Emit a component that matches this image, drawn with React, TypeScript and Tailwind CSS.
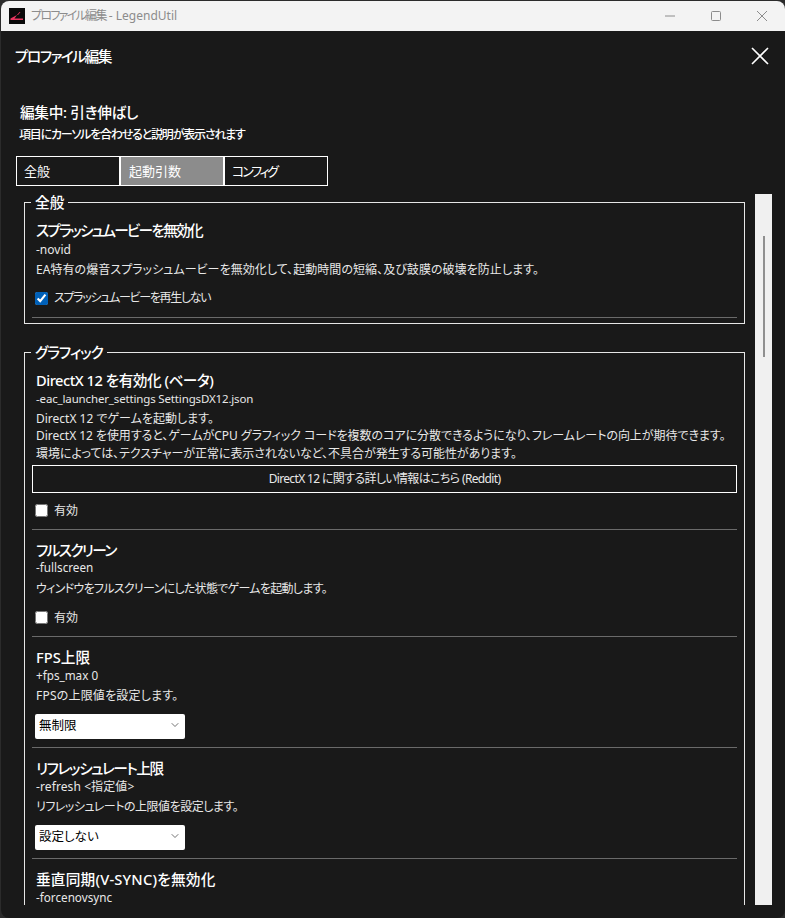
import React from 'react'
import { ChevronDown } from 'lucide-react'

const Heading = ({ title, code, titleClass, codeClass }: { title: string, code: string, titleClass?: string, codeClass?: string }) => (
  <>
    <h4 className={`text-[14.67px] leading-[20px] font-medium text-white ${titleClass}`}>{title}</h4>
    <p className={`leading-[16px] text-[#e8e8e8] ${codeClass}`}>{code}</p>
  </>
)

const Check = ({ label, checked, labelClass }: { label: string, checked?: boolean, labelClass?: string }) => (
  <label className="flex items-center gap-[6px] -ml-px text-[12px] leading-[16px] text-[#e8e8e8]">
    <input type="checkbox" defaultChecked={checked} className="w-[13px] h-[13px] m-0 accent-[#0060b8]" />
    <span className={labelClass}>{label}</span>
  </label>
)

const Dropdown = ({ value }: { value: string }) => (
  <div className="relative w-[150px] h-[25px] -ml-px">
    <select defaultValue={value} className="appearance-none w-full h-full bg-white text-black text-[12.5px] pl-[4px] rounded-[2px] outline-none">
      <option>{value}</option>
    </select>
    <ChevronDown size={12} strokeWidth={1.5} className="absolute right-[4px] top-[7px] text-[#444] pointer-events-none" />
  </div>
)

const Divider = () => <hr className="border-0 h-px bg-[#6a6a6a] -mx-[4px]" />

const Section = ({ title, className, legendClass, children }: { title: string, className?: string, legendClass?: string, children: React.ReactNode }) => (
  <fieldset className={`border border-[#e6e6e6] mx-[24px] w-[721px] px-[11px] ${className}`}>
    <legend className={`px-[4px] -ml-[5px] text-[14.67px] leading-[16px] font-medium text-white ${legendClass}`}>{title}</legend>
    {children}
  </fieldset>
)

export default function App() {
  return (
    <div className="w-[785px] h-[918px] bg-[#2b2b2b] pt-px pl-px overflow-hidden [font-family:'Noto_Sans','Noto_Sans_CJK_JP',sans-serif] [font-feature-settings:'palt']">
      <div className="h-[917px] bg-[#191919] rounded-lg overflow-hidden flex flex-col">
        <div className="h-[30px] shrink-0 bg-[#f3f3f3] flex items-center pl-[8px]">
          <svg width="16" height="16" viewBox="0 0 16 16">
            <rect width="16" height="16" fill="#0a0a0a" />
            <path d="M1.5 10.5 L8 7 L5.5 10.5 H14 V12 H1.5 Z" fill="#e8345f" />
            <path d="M8 7 L10.5 4 L11.5 4 L9 7 Z" fill="#e8345f" />
          </svg>
          <span className="ml-[6px] text-[12px] text-[#8c8c8c]"><span className="tracking-[-1.7px]">プロファイル編集</span> - LegendUtil</span>
          <div className="ml-auto flex items-center">
            <svg width="46" height="30" viewBox="0 0 46 30"><path d="M18 15 H28" stroke="#8c8c8c" /></svg>
            <svg width="46" height="30" viewBox="0 0 46 30"><rect x="18.5" y="10.5" width="9" height="9" rx="1" fill="none" stroke="#8c8c8c" /></svg>
            <svg width="46" height="30" viewBox="0 0 46 30"><path d="M18 10 L28 20 M28 10 L18 20" stroke="#8c8c8c" /></svg>
          </div>
        </div>

        <div className="flex items-center justify-between h-[35px] mt-[7px] pl-[14px] pr-[16px]">
          <h1 className="text-[14.67px] tracking-[-1.5px] font-medium text-white">プロファイル編集</h1>
          <svg width="18" height="18" viewBox="0 0 18 18"><path d="M1 1 L17 17 M17 1 L1 17" stroke="#fff" strokeWidth="1.6" /></svg>
        </div>

        <div className="pl-[19px] mt-[29px]">
          <h2 className="text-[14.67px] leading-[20px] tracking-[-0.3px] font-medium text-white">編集中: 引き伸ばし</h2>
          <p className="text-[12px] leading-[16px] mt-[5px] -ml-px tracking-[-1.2px] font-medium text-white">項目にカーソルを合わせると説明が表示されます</p>
        </div>

        <div className="flex ml-[15px] mt-[13px]">
          <div className="w-[104px] h-[30px] border border-white flex items-center pl-[7px] pt-px text-[13px] text-white">全般</div>
          <div className="w-[104px] h-[30px] border border-white bg-[#8c8c8c] flex items-center pl-[8px] pt-px text-[13px] text-white">起動引数</div>
          <div className="w-[104px] h-[30px] border border-white flex items-center pl-[7px] pt-px text-[13px] tracking-[-2.2px] text-white">コンフィグ</div>
        </div>

        <div className="relative h-[715px] mt-[4px] pt-[4px] overflow-hidden -ml-px">
          <div className="absolute left-[755px] top-[4px] w-[17px] h-[711px] bg-[#f0f0f0]">
            <div className="absolute left-[8px] top-[42px] w-[2px] h-[121px] bg-[#8f8f8f]" />
          </div>

          <Section title="全般" className="h-[130px] pt-[10px]">
            <Heading title="スプラッシュムービーを無効化" code="-novid" titleClass="tracking-[-1.75px]" codeClass="mt-[2px] text-[12px]" />
            <p className="text-[12px] leading-[18px] mt-[3px] tracking-[0.05px] text-[#e8e8e8]">EA特有の爆音スプラッシュムービーを無効化して、起動時間の短縮、及び鼓膜の破壊を防止します。</p>
            <div className="mt-[11px]"><Check label="スプラッシュムービーを再生しない" labelClass="tracking-[-1.3px]" checked /></div>
            <div className="mt-[11px]"><Divider /></div>
          </Section>

          <Section title="グラフィック" legendClass="tracking-[-1px]" className="mt-[20px] pt-[10px] h-[600px]">
            <Heading title="DirectX 12 を有効化 (ベータ)" code="-eac_launcher_settings SettingsDX12.json" titleClass="tracking-[-0.5px]" codeClass="mt-[1px] text-[11.5px] tracking-[-0.15px]" />
            <div className="text-[12px] leading-[17.25px] mt-[3px] text-[#e8e8e8]">
              <p>DirectX 12 でゲームを起動します。</p>
              <p className="tracking-[-0.05px]">DirectX 12 を使用すると、ゲームがCPU グラフィック コードを複数のコアに分散できるようになり、フレームレートの向上が期待できます。</p>
              <p className="tracking-[-0.05px]">環境によっては、テクスチャーが正常に表示されないなど、不具合が発生する可能性があります。</p>
            </div>
            <button className="block -mx-[4px] w-[705px] h-[28px] mt-[3px] border border-white text-[12px] tracking-[-0.65px] text-[#e8e8e8]">DirectX 12 に関する詳しい情報はこちら (Reddit)</button>
            <div className="mt-[10px]"><Check label="有効" /></div>
            <div className="mt-[10px]"><Divider /></div>

            <div className="mt-[10px]"><Heading title="フルスクリーン" code="-fullscreen" titleClass="tracking-[-1.6px]" codeClass="-mt-px text-[11.7px]" /></div>
            <p className="text-[12px] leading-[18px] mt-[5px] tracking-[-0.7px] text-[#e8e8e8]">ウィンドウをフルスクリーンにした状態でゲームを起動します。</p>
            <div className="mt-[12px]"><Check label="有効" /></div>
            <div className="mt-[10px]"><Divider /></div>

            <div className="mt-[10px]"><Heading title="FPS上限" code="+fps_max 0" codeClass="text-[11.7px]" /></div>
            <p className="text-[12px] leading-[18px] mt-[4px] tracking-[0.2px] text-[#e8e8e8]">FPSの上限値を設定します。</p>
            <div className="mt-[7px]"><Dropdown value="無制限" /></div>
            <div className="mt-[10px]"><Divider /></div>

            <div className="mt-[10px]"><Heading title="リフレッシュレート上限" code="-refresh <指定値>" titleClass="tracking-[-1.4px]" codeClass="mt-[1px] text-[12px] tracking-[0.1px]" /></div>
            <p className="text-[12px] leading-[18px] mt-[3px] tracking-[-0.5px] text-[#e8e8e8]">リフレッシュレートの上限値を設定します。</p>
            <div className="mt-[7px]"><Dropdown value="設定しない" /></div>
            <div className="mt-[10px]"><Divider /></div>

            <div className="mt-[10px]"><Heading title="垂直同期(V-SYNC)を無効化" code="-forcenovsync" titleClass="tracking-[0.2px]" codeClass="text-[11.7px]" /></div>
          </Section>
        </div>
      </div>
    </div>
  )
}
